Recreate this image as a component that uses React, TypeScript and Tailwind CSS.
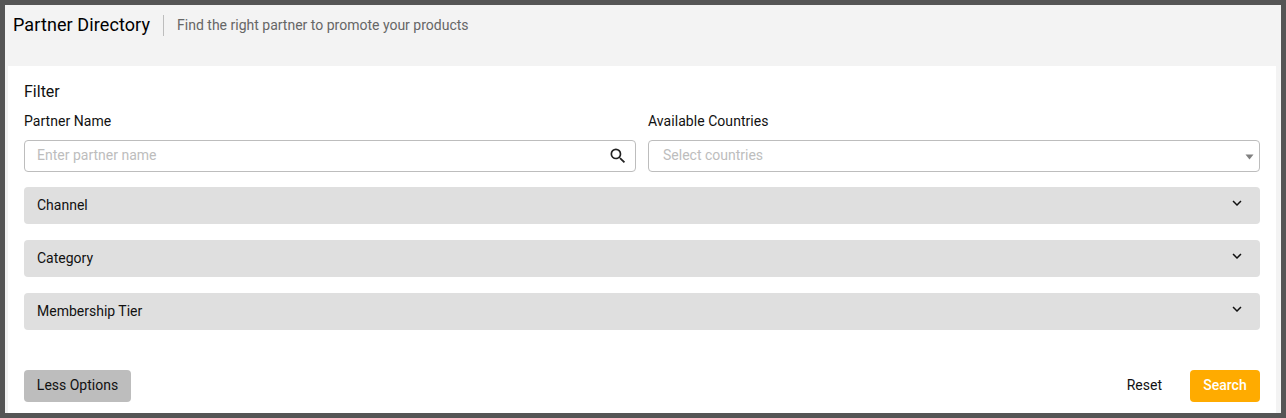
import { MdKeyboardArrowDown, MdSearch } from "react-icons/md";

const sections = ["Channel", "Category", "Membership Tier"];

const App = () => {
  return (
    <div className="h-[418px] w-[1286px] border-[5px] border-[#555555] bg-[#f3f3f3] font-['Roboto',sans-serif] text-[#111111]">
      <header className="flex h-[61px] items-start pl-[8px] pt-[10px]">
        <h1 className="h-[21px] border-r border-[#bdbdbd] pr-[13px] pb-[1px] text-[18px] font-[450] leading-[19px] tracking-[0.1px] text-black">Partner Directory</h1>
        <p className="pl-[13px] text-[14px] leading-[21px] text-[#666666]">Find the right partner to promote your products</p>
      </header>

      <main className="ml-[3px] mr-[5px] flex h-[347px] flex-col bg-white px-[16px] pt-[16px]">
        <h2 className="text-[16px] font-[450] leading-[20px]">Filter</h2>

        <div className="mt-[9px] grid grid-cols-2 gap-x-[12px]">
          <div>
            <label className="block text-[14px] font-[450] leading-[20px] tracking-[0.05px]">Partner Name</label>
            <div className="mt-[9px] flex h-[32px] items-center rounded-[4px] border border-[#bdbdbd] pl-[12px] pr-[7px]">
              <span className="flex-1 pb-[2px] text-[14px] text-[#bdbdbd]">Enter partner name</span>
              <MdSearch size={20} className="text-[#222222]" />
            </div>
          </div>
          <div>
            <label className="block text-[14px] font-[450] leading-[20px] tracking-[0.05px]">Available Countries</label>
            <div className="mt-[9px] flex h-[32px] items-center rounded-[4px] border border-[#bdbdbd] pl-[14px] pr-[5px]">
              <span className="flex-1 pb-[2px] text-[14px] text-[#bdbdbd]">Select countries</span>
              <svg width="9" height="6" viewBox="0 0 9 6" className="mt-[2px]">
                <path d="M0.5 0.5h8L4.5 5.5z" fill="#808080" />
              </svg>
            </div>
          </div>
        </div>

        <div className="mt-[15px] flex flex-col gap-[16px]">
          {sections.map((section) => (
            <div key={section} className="flex h-[37px] items-center justify-between rounded-[4px] bg-[#dfdfdf] pl-[13px] pr-[14px]">
              <span className="text-[14px] font-[450]">{section}</span>
              <MdKeyboardArrowDown size={18} className="mb-[5px]" />
            </div>
          ))}
        </div>

        <div className="mt-[40px] flex items-center justify-between">
          <button type="button" className="h-[32px] w-[107px] rounded-[4px] bg-[#bdbdbd] pb-[2px] text-[14px] font-[450]">
            Less Options
          </button>
          <div className="flex items-center gap-[28px]">
            <button type="button" className="pb-[2px] text-[14px] font-[450]">Reset</button>
            <button type="button" className="h-[32px] w-[70px] rounded-[4px] bg-[#ffab00] pb-[2px] text-[14px] font-medium text-white">
              Search
            </button>
          </div>
        </div>
      </main>
    </div>
  );
};

export default App;
